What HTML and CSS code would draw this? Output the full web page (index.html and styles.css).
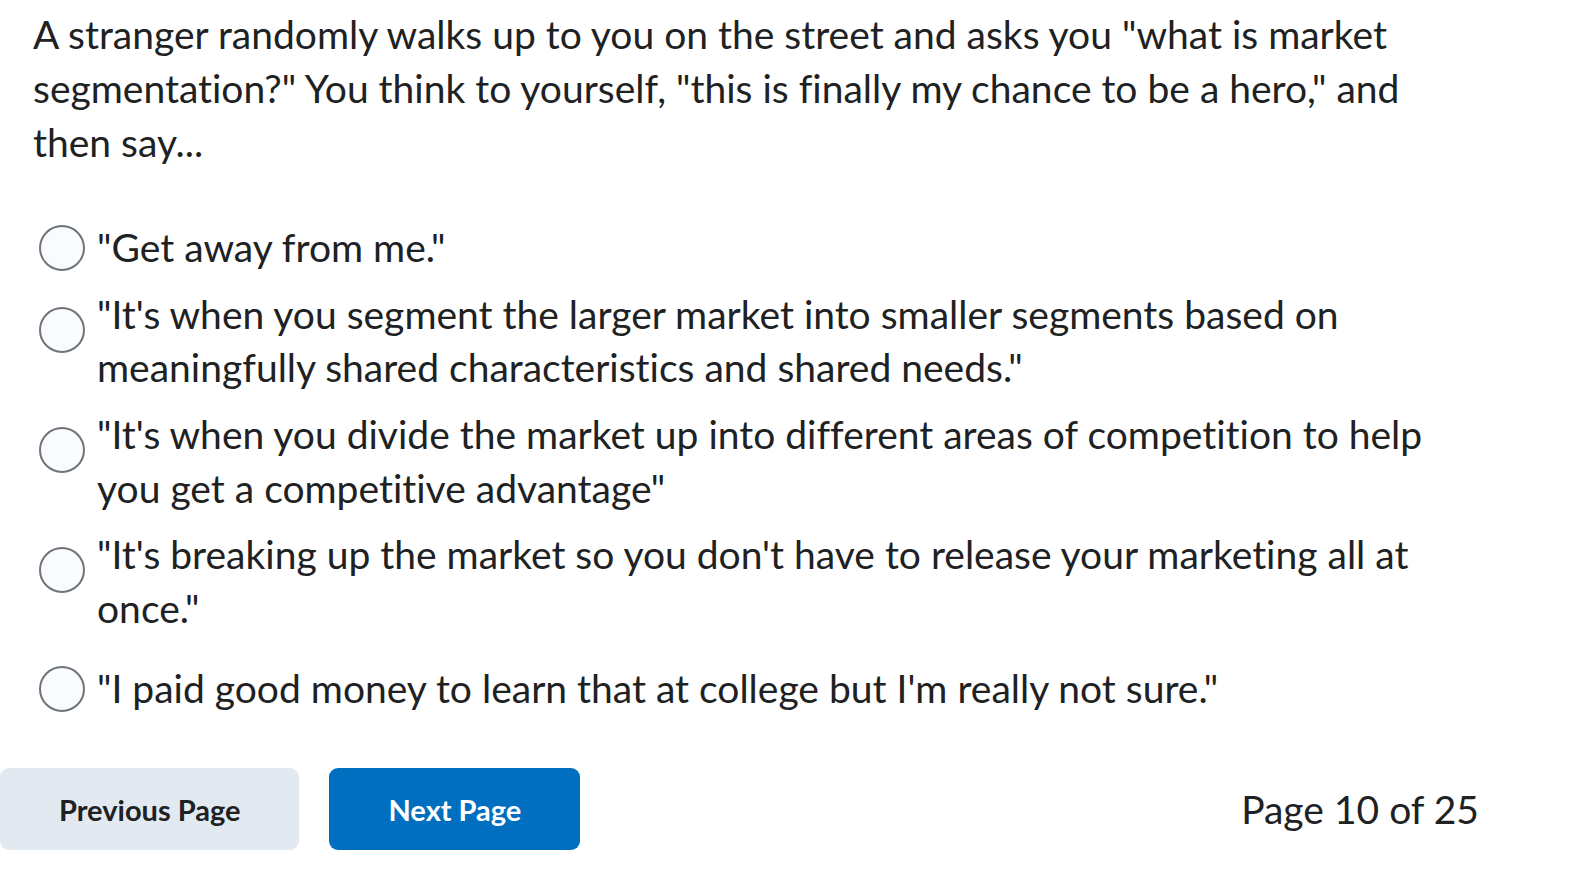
FILE: index.html
```html
<!DOCTYPE html>
<html lang="en">
<head>
<meta charset="utf-8">
<title>Quiz</title>
<link rel="stylesheet" href="styles.css">
</head>
<body>
<main class="page">
  <p class="question">A stranger randomly walks up to you on the street and asks you "what is market segmentation?" You think to yourself, "this is finally my chance to be a hero," and then say...</p>
  <ul class="choices">
    <li class="choice single"><span class="radio"></span><span class="label">"Get away from me."</span></li>
    <li class="choice"><span class="radio"></span><span class="label">"It's when you segment the larger market into smaller segments based on meaningfully shared characteristics and shared needs."</span></li>
    <li class="choice"><span class="radio"></span><span class="label">"It's when you divide the market up into different areas of competition to help you get a competitive advantage"</span></li>
    <li class="choice"><span class="radio"></span><span class="label">"It's breaking up the market so you don't have to release your marketing all at once."</span></li>
    <li class="choice single last"><span class="radio"></span><span class="label">"I paid good money to learn that at college but I'm really not sure."</span></li>
  </ul>
  <div class="nav">
    <button class="btn btn-prev">Previous Page</button>
    <button class="btn btn-next">Next Page</button>
    <span class="pager">Page 10 of 25</span>
  </div>
</main>
</body>
</html>
```
FILE: styles.css
```css
html, body {
  margin: 0;
  padding: 0;
  background: #ffffff;
}
body {
  font-family: Lato, "Open Sans", sans-serif;
  color: #202122;
  font-variant-ligatures: no-common-ligatures;
}
.page {
  width: 1456px;
  padding-top: 8px;
}
.question {
  margin: 0;
  padding-left: 33px;
  font-size: 39px;
  line-height: 53.8px;
}
.choices {
  list-style: none;
  margin: 52px 0 0 0;
  padding: 0 0 0 39px;
}
.choice {
  display: flex;
  align-items: flex-start;
  gap: 12px;
  font-size: 39px;
  line-height: 53.8px;
  margin-bottom: 12.5px;
}
.choice.single {
  align-items: center;
}
.choice.last {
  margin-top: 27px;
  margin-bottom: 0;
}
.radio {
  flex: 0 0 auto;
  width: 42px;
  height: 42px;
  border: 2px solid #6e7477;
  border-radius: 50%;
  background: #f9fbff;
  margin-top: 19px;
}
.choice.single .radio {
  margin-top: 0;
}
.nav {
  display: flex;
  align-items: center;
  margin-top: 52px;
  margin-right: -23px;
}
.btn {
  font-family: Lato, "Open Sans", sans-serif;
  font-weight: 700;
  font-size: 29px;
  font-variant-ligatures: no-common-ligatures;
  height: 82px;
  padding: 0 59px;
  border: none;
  border-radius: 9px;
  cursor: pointer;
}
.btn-prev {
  background: #e3e9f1;
  color: #202122;
}
.btn-next {
  background: #006fbf;
  color: #ffffff;
  margin-left: 30px;
}
.pager {
  margin-left: auto;
  font-size: 39px;
}
```
